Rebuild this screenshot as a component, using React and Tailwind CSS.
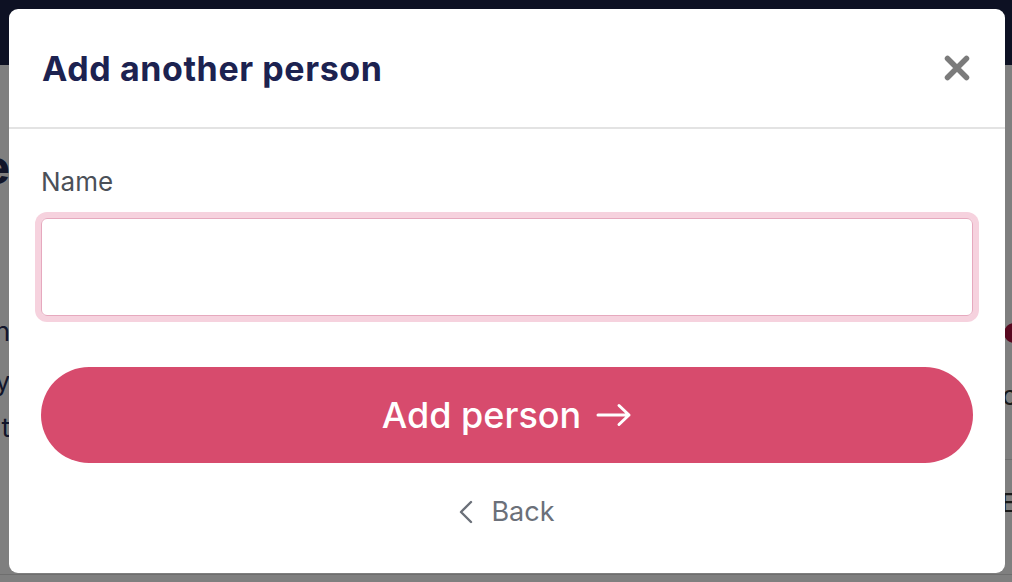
import React, { useState } from 'react';

const font = { fontFamily: 'Inter, "Noto Sans", sans-serif' };

const CloseIcon = () => (
  <svg width="26" height="26" viewBox="0 0 26 26" fill="none">
    <path d="M3.5 3.5L22.5 22.5M22.5 3.5L3.5 22.5" stroke="currentColor" strokeWidth="5.5" strokeLinecap="round" />
  </svg>
);

const ArrowRight = () => (
  <svg width="36" height="24" viewBox="0 0 36 24" fill="none">
    <path d="M2 12H33M23 2.5L33 12L23 21.5" stroke="currentColor" strokeWidth="3" strokeLinecap="round" strokeLinejoin="round" />
  </svg>
);

const ChevronLeft = () => (
  <svg width="14" height="24" viewBox="0 0 14 24" fill="none">
    <path d="M12 2L2 12L12 22" stroke="currentColor" strokeWidth="2.4" strokeLinecap="round" strokeLinejoin="round" />
  </svg>
);

// the dimmed page that sits behind the dialog
const BackgroundPage = () => (
  <div className="flex h-[582px] w-full flex-col bg-white">
    <div className="h-[65px] w-full bg-[#1a2246]" />
    <div className="flex flex-1">
      <div className="flex w-[10px] flex-col items-end overflow-hidden text-[#222a52]" style={font}>
        <div className="mt-[78px] text-[48px] font-bold leading-none">e</div>
        <div className="mt-[128px] text-[26px] leading-none">n</div>
        <div className="mt-[24px] text-[26px] leading-none">y</div>
        <div className="mt-[20px] text-[26px] leading-none">t</div>
      </div>
      <div className="flex-1" />
      <div className="flex w-[14px] flex-col items-start overflow-hidden text-[#333]" style={font}>
        <div className="mt-[258px] ml-[6px] h-[20px] w-[20px] rounded-full bg-[#b0103e]" />
        <div className="mt-[40px] ml-[4px] text-[26px] leading-none">c</div>
        <div className="mt-[50px] h-px w-full bg-[#ddd]" />
        <div className="mt-[30px] ml-[3px] text-[26px] leading-none">E</div>
      </div>
    </div>
    <div className="h-[8px] w-full border-t border-[#ddd]" />
  </div>
);

const App = () => {
  const [name, setName] = useState('');

  return (
    <div className="relative h-[582px] w-full overflow-hidden" style={font}>
      <BackgroundPage />

      {/* overlay + dialog */}
      <div className="absolute inset-0 bg-black/50 p-[9px]">
        <div className="flex h-[564px] w-[996px] flex-col rounded-[9px] bg-white">
          <div className="flex h-[120px] items-center justify-between border-b-2 border-[#e3e3e3] pl-[33px] pr-[35px]">
            <h2 className="text-[34px] font-bold tracking-[0.6px] text-[#1c2250]">Add another person</h2>
            <button className="text-[#7b7b7b]">
              <CloseIcon />
            </button>
          </div>

          <div className="flex flex-col px-[32px] pt-[38px]">
            <label className="text-[26px] leading-[30px] text-[#4b5058]">Name</label>
            <input
              type="text"
              value={name}
              onChange={(e) => setName(e.target.value)}
              className="mt-[21px] h-[98px] w-full rounded-[6px] border border-[#e6a9be] px-4 text-[24px] outline-none ring-[6px] ring-[#f6d2de]"
            />

            <button className="mt-[51px] flex h-[96px] w-full items-center justify-center gap-[15px] rounded-full bg-[#d74b6d] text-[36px] font-medium text-white">
              Add person
              <ArrowRight />
            </button>

            <button className="mt-[34px] flex items-center justify-center gap-[18px] self-center text-[27px] leading-[30px] text-[#6b7079]">
              <ChevronLeft />
              Back
            </button>
          </div>
        </div>
      </div>
    </div>
  );
};

export default App;
